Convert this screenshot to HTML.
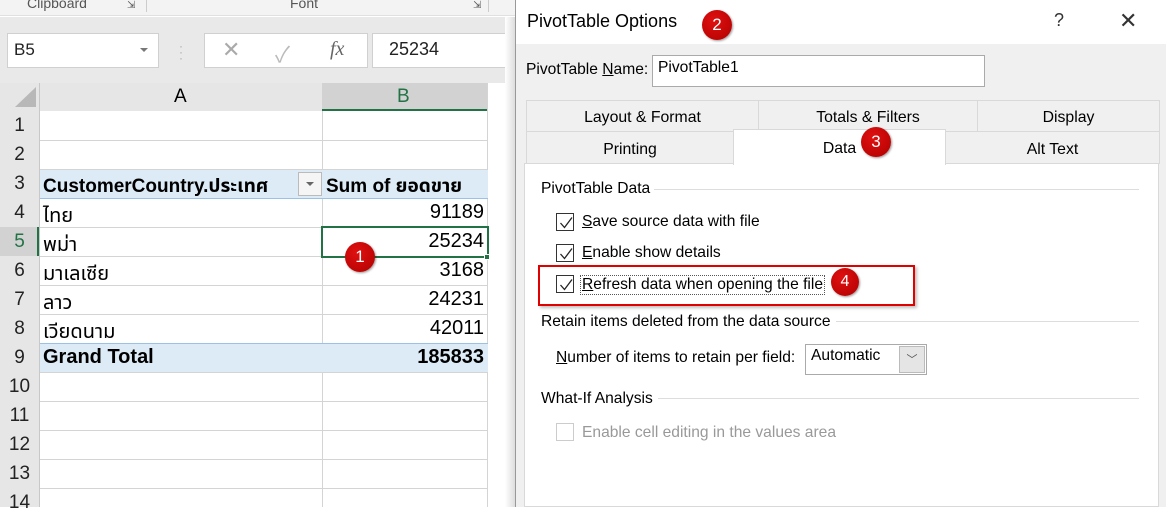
<html><head><style>
*{margin:0;padding:0;box-sizing:border-box}
body{width:1166px;height:507px;overflow:hidden;background:#fff;font-family:"Segoe UI","Liberation Sans","Noto Sans CJK SC",sans-serif;position:relative}
.a{position:absolute}
.badge{position:absolute;width:30px;height:30px;border-radius:50%;background:radial-gradient(circle at 40% 35%,#e01010,#b00000);color:#fff;font-size:17px;text-align:center;line-height:30px;box-shadow:1px 1px 2px rgba(0,0,0,.4)}
.cell{position:absolute;font-size:20px;color:#000;font-family:"Liberation Sans","Noto Sans CJK SC","Noto Sans Thai",sans-serif}
.rh{position:absolute;left:0;width:39px;text-align:center;font-size:19px;color:#222;font-family:"Liberation Sans",sans-serif}
.hl{position:absolute;left:40px;width:448px;height:1px;background:#d4d4d4}
.cb{position:absolute;width:18px;height:18px;border:1px solid #333;background:#fff}
.cb svg{position:absolute;left:1px;top:1px}
.t{position:absolute;font-size:15.6px;color:#000}
.tab{position:absolute;border:1px solid #d9d9d9;background:#f0f0f0;font-size:15.8px;text-align:center}
</style></head><body>
<!-- Excel -->
<div class="a" style="left:0;top:0;width:515px;height:16px;background:#f3f3f3;border-bottom:1px solid #e0e0e0"></div>
<div class="a" style="left:27px;top:-5px;font-size:14px;color:#555">Clipboard</div>
<div class="a" style="left:127px;top:0;font-size:10px;color:#555">⇲</div>
<div class="a" style="left:146px;top:0;width:1px;height:12px;background:#ccc"></div>
<div class="a" style="left:290px;top:-5px;font-size:14px;color:#555">Font</div>
<div class="a" style="left:473px;top:0;font-size:10px;color:#555">⇲</div>
<div class="a" style="left:488px;top:0;width:1px;height:12px;background:#ccc"></div>
<div class="a" style="left:0;top:17px;width:515px;height:66px;background:#e9e9e9"></div>
<div class="a" style="left:7px;top:33px;width:152px;height:35px;background:#fff;border:1px solid #d0d0d0"></div>
<div class="a" style="left:14px;top:40px;font-size:17px;color:#222">B5</div>
<div class="a" style="left:140px;top:48px;width:0;height:0;border-left:4px solid transparent;border-right:4px solid transparent;border-top:4px solid #777"></div>
<div class="a" style="left:179px;top:43px;color:#aaa;font-size:12px;line-height:6px">·<br>·<br>·</div>
<div class="a" style="left:204px;top:33px;width:164px;height:35px;background:#fff;border:1px solid #d0d0d0"></div>
<div class="a" style="left:222px;top:37px;font-size:22px;color:#aaa">✕</div>
<div class="a" style="left:275px;top:37px;font-size:22px;color:#bbb">✓</div>
<div class="a" style="left:330px;top:38px;font-size:20px;color:#666;font-style:italic;font-family:'Liberation Serif',serif">fx</div>
<div class="a" style="left:372px;top:33px;width:145px;height:35px;background:#fff;border:1px solid #d0d0d0"></div>
<div class="a" style="left:389px;top:39px;font-size:18px;color:#222;font-family:'Liberation Sans',sans-serif">25234</div>
<!-- grid headers -->
<div class="a" style="left:0;top:83px;width:515px;height:28px;background:#e6e6e6"></div>
<div class="a" style="left:15px;top:87px;width:0;height:0;border-left:21px solid transparent;border-bottom:20px solid #b8b8b8"></div>
<div class="a" style="left:39px;top:83px;width:1px;height:424px;background:#c8c8c8"></div>
<div class="a" style="left:322px;top:83px;width:166px;height:28px;background:#d2d2d2;border-bottom:2px solid #217346"></div>
<div class="a" style="left:174px;top:86px;font-size:19px;font-family:'Liberation Sans',sans-serif">A</div>
<div class="a" style="left:397px;top:86px;font-size:19px;color:#217346;font-family:'Liberation Sans',sans-serif">B</div>
<div class="a" style="left:0;top:111px;width:39px;height:396px;background:#e6e6e6"></div>
<div class="a" style="left:0;top:227px;width:39px;height:29px;background:#d2d2d2;border-right:2px solid #217346"></div>
<div class="a" style="left:40px;top:111px;width:448px;height:396px;background:#fff"></div>
<div class="a" style="left:488px;top:83px;width:27px;height:424px;background:#fff"></div>
<div class="a" style="left:505px;top:17px;width:10px;height:490px;background:linear-gradient(90deg,#fff,#ddd)"></div>
<div class="a" style="left:322px;top:111px;width:1px;height:396px;background:#d4d4d4"></div>
<div class="a" style="left:487px;top:83px;width:1px;height:424px;background:#d4d4d4"></div>
<div class="a" style="left:40px;top:169px;width:448px;height:29px;background:#ddebf7"></div>
<div class="a" style="left:40px;top:343px;width:448px;height:29px;background:#ddebf7;border-top:1px solid #9bc2e6"></div>
<div class="hl" style="top:140px"></div><div class="hl" style="top:169px"></div><div class="hl" style="top:198px;background:#9bc2e6"></div>
<div class="hl" style="top:227px"></div><div class="hl" style="top:256px"></div><div class="hl" style="top:285px"></div><div class="hl" style="top:314px"></div>
<div class="hl" style="top:372px"></div><div class="hl" style="top:401px"></div><div class="hl" style="top:430px"></div><div class="hl" style="top:459px"></div><div class="hl" style="top:488px"></div>
<div class="rh" style="top:115px">1</div><div class="rh" style="top:144px">2</div><div class="rh" style="top:173px">3</div><div class="rh" style="top:202px">4</div>
<div class="rh" style="top:231px;color:#217346">5</div><div class="rh" style="top:260px">6</div><div class="rh" style="top:289px">7</div><div class="rh" style="top:318px">8</div>
<div class="rh" style="top:347px">9</div><div class="rh" style="top:376px">10</div><div class="rh" style="top:405px">11</div><div class="rh" style="top:434px">12</div><div class="rh" style="top:463px">13</div><div class="rh" style="top:492px">14</div>
<div class="cell" style="left:43px;top:172px;font-weight:bold;font-size:19px">CustomerCountry.ประเทศ</div>
<div class="a" style="left:298px;top:172px;width:24px;height:24px;border:1px solid #bbb;background:#f5f5f5"></div>
<div class="a" style="left:306px;top:182px;border-left:4px solid transparent;border-right:4px solid transparent;border-top:4px solid #666"></div>
<div class="cell" style="left:326px;top:172px;font-weight:bold;font-size:19px">Sum of ยอดขาย</div>
<div class="cell" style="left:43px;top:201px">ไทย</div><div class="cell" style="left:400px;width:84px;text-align:right;top:201px">91189</div>
<div class="cell" style="left:43px;top:230px">พม่า</div><div class="cell" style="left:400px;width:84px;text-align:right;top:230px">25234</div>
<div class="cell" style="left:43px;top:259px">มาเลเซีย</div><div class="cell" style="left:400px;width:84px;text-align:right;top:259px">3168</div>
<div class="cell" style="left:43px;top:288px">ลาว</div><div class="cell" style="left:400px;width:84px;text-align:right;top:288px">24231</div>
<div class="cell" style="left:43px;top:317px">เวียดนาม</div><div class="cell" style="left:400px;width:84px;text-align:right;top:317px">42011</div>
<div class="cell" style="left:43px;top:346px;font-weight:bold">Grand Total</div><div class="cell" style="left:380px;width:104px;text-align:right;top:346px;font-weight:bold">185833</div>
<div class="a" style="left:321px;top:226px;width:168px;height:32px;border:2px solid #217346"></div>
<div class="a" style="left:484px;top:254px;width:6px;height:6px;background:#217346;border:1px solid #fff"></div>
<div class="badge" style="left:345px;top:242px">1</div>
<!-- Dialog -->
<div class="a" style="left:515px;top:0;width:651px;height:507px;background:#f0f0f0;border-left:1px solid #999"></div>
<div class="a" style="left:516px;top:0;width:650px;height:44px;background:#fff"></div>
<div class="a" style="left:527px;top:11px;font-size:18px">PivotTable Options</div>
<div class="a" style="left:1054px;top:10px;font-size:18px;color:#333">?</div>
<div class="a" style="left:1119px;top:8px;font-size:22px;color:#333">✕</div>
<div class="badge" style="left:702px;top:10px">2</div>
<div class="t" style="left:526px;top:61px">PivotTable <u>N</u>ame:</div>
<div class="a" style="left:652px;top:55px;width:333px;height:32px;background:#fff;border:1px solid #aaa"></div>
<div class="t" style="left:658px;top:59px">PivotTable1</div>
<div class="tab" style="left:526px;top:100px;width:233px;height:32px;line-height:34px">Layout &amp; Format</div>
<div class="tab" style="left:758px;top:100px;width:220px;height:32px;line-height:34px">Totals &amp; Filters</div>
<div class="tab" style="left:977px;top:100px;width:183px;height:32px;line-height:34px">Display</div>
<div class="tab" style="left:526px;top:131px;width:208px;height:33px;line-height:35px">Printing</div>
<div class="tab" style="left:945px;top:131px;width:215px;height:33px;line-height:35px">Alt Text</div>
<div class="a" style="left:524px;top:163px;width:635px;height:344px;background:#fff;border:1px solid #d9d9d9"></div>
<div class="tab" style="left:733px;top:129px;width:213px;height:36px;line-height:38px;background:#fff;border-bottom:none">Data</div>
<div class="badge" style="left:861px;top:127px">3</div>
<div class="t" style="left:541px;top:180px">PivotTable Data</div>
<div class="a" style="left:654px;top:189px;width:485px;height:1px;background:#ddd"></div>
<div class="cb" style="left:556px;top:213px"><svg width="16" height="16"><path d="M2.5 8 L6.5 12.5 L14 2.5" stroke="#222" stroke-width="1.3" fill="none"/></svg></div>
<div class="t" style="left:582px;top:213px"><u>S</u>ave source data with file</div>
<div class="cb" style="left:556px;top:244px"><svg width="16" height="16"><path d="M2.5 8 L6.5 12.5 L14 2.5" stroke="#222" stroke-width="1.3" fill="none"/></svg></div>
<div class="t" style="left:582px;top:244px"><u>E</u>nable show details</div>
<div class="cb" style="left:556px;top:275px"><svg width="16" height="16"><path d="M2.5 8 L6.5 12.5 L14 2.5" stroke="#222" stroke-width="1.3" fill="none"/></svg></div>
<div class="t" style="left:580px;top:275px;border:1px dotted #555;padding:0 1px"><u>R</u>efresh data when opening the file</div>
<div class="a" style="left:538px;top:265px;width:377px;height:41px;border:2px solid #e00000;box-shadow:2px 2px 3px rgba(0,0,0,.25)"></div>
<div class="badge" style="left:831px;top:268px;width:28px;height:28px;line-height:28px;font-size:16px">4</div>
<div class="t" style="left:541px;top:313px">Retain items deleted from the data source</div>
<div class="a" style="left:836px;top:321px;width:303px;height:1px;background:#ddd"></div>
<div class="t" style="left:556px;top:349px"><u>N</u>umber of items to retain per field:</div>
<div class="a" style="left:805px;top:344px;width:122px;height:31px;border:1px solid #aaa;background:#fff"></div>
<div class="t" style="left:811px;top:347px">Automatic</div>
<div class="a" style="left:899px;top:346px;width:26px;height:27px;background:#e5e5e5;border:1px solid #bbb;text-align:center;font-size:11px;line-height:26px;color:#555">﹀</div>
<div class="t" style="left:541px;top:390px">What-If Analysis</div>
<div class="a" style="left:658px;top:398px;width:481px;height:1px;background:#ddd"></div>
<div class="cb" style="left:556px;top:423px;border-color:#ccc"></div>
<div class="t" style="left:582px;top:424px;color:#999">Enable cell editing in the values area</div>
</body></html>
